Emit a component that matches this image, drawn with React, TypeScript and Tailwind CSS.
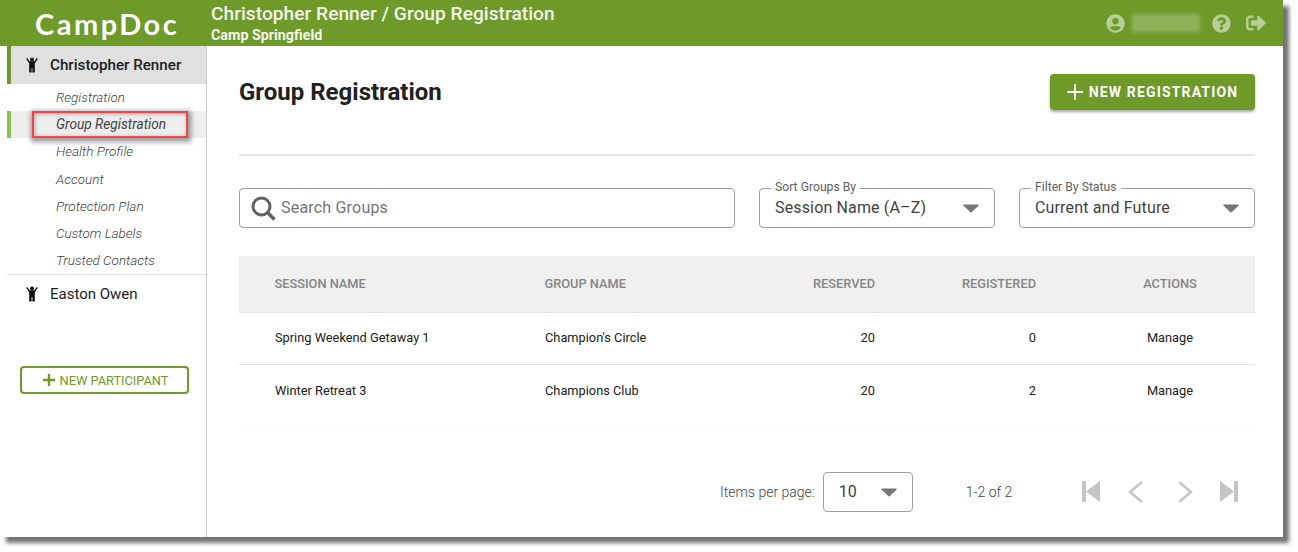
import { FaQuestionCircle, FaSignOutAlt, FaUserCircle } from "react-icons/fa";

const subItems = [
  "Registration",
  "Group Registration",
  "Health Profile",
  "Account",
  "Protection Plan",
  "Custom Labels",
  "Trusted Contacts",
];

const rows = [
  { session: "Spring Weekend Getaway 1", group: "Champion's Circle", reserved: 20, registered: 0 },
  { session: "Winter Retreat 3", group: "Champions Club", reserved: 20, registered: 2 },
];

function PersonIcon() {
  return (
    <svg width="12" height="16" viewBox="0 0 12 16" fill="#111">
      <circle cx="6" cy="2.4" r="2" />
      <path d="M.2 1.8 1.3 1l2.2 3.2h5L10.7 1l1.1.8L8.8 6.6v8.9H6.4v-4.6h-.8v4.6H3.2V6.6z" />
    </svg>
  );
}

function Caret() {
  return (
    <svg width="16" height="9" viewBox="0 0 16 9" fill="#757575" stroke="#757575" strokeWidth="1.5" strokeLinejoin="round">
      <path d="M1 1.2h14L8 7.8z" />
    </svg>
  );
}

function SelectBox({ label, value }: { label: string; value: string }) {
  return (
    <div className="relative flex h-10 w-[236px] items-center justify-between rounded border border-[#9e9e9e] pl-[15px] pr-[15px]">
      <span className="absolute left-[11px] top-[-9px] bg-white px-1 text-[12.2px] leading-[14px] text-[#616161]">{label}</span>
      <span className="text-base tracking-[0.15px] text-[#424242]">{value}</span>
      <Caret />
    </div>
  );
}

function PagerIcon({ d, filled, className }: { d: string; filled?: boolean; className?: string }) {
  return (
    <svg
      width="20"
      height="22"
      viewBox="0 0 20 22"
      fill={filled ? "#c4c4c4" : "none"}
      stroke={filled ? "none" : "#c4c4c4"}
      strokeWidth={filled ? 0 : 2.4}
      className={className}
    >
      <path d={d} />
    </svg>
  );
}

export default function App() {
  return (
    <div className="h-[552px] w-[1298px] overflow-hidden bg-white font-['Roboto',sans-serif]">
      <div className="flex h-[537px] w-[1283px] flex-col bg-white shadow-[6px_6px_4px_rgba(0,0,0,0.55)]">
        {/* Header */}
        <header className="flex h-[46px] shrink-0 items-center bg-[#6d9a29] text-white">
          <div className="w-[211px] shrink-0 pl-[35px] font-['Lato',sans-serif] text-[29px] font-bold leading-none tracking-[2.5px]">CampDoc</div>
          <div className="flex-1 pt-[1px]">
            <div className="text-[19.2px] font-medium leading-[22px] text-[#f4f8ec]">Christopher Renner / Group Registration</div>
            <div className="mt-[1px] text-[14.3px] font-bold leading-[19px] text-[#f4f8ec]">Camp Springfield</div>
          </div>
          <div className="flex items-center pr-[17px] text-[#b8cf94]">
            <FaUserCircle className="text-[19px]" />
            <div className="ml-[7px] h-[18px] w-[68px] bg-[#8fb35c] blur-[2px]" />
            <FaQuestionCircle className="ml-[12px] text-[19px]" />
            <FaSignOutAlt className="ml-[15px] text-[20px]" />
          </div>
        </header>

        <div className="flex min-h-0 flex-1">
          {/* Sidebar */}
          <aside className="relative ml-[7px] w-[200px] shrink-0 border-r border-[#cccccc]">
            <div className="flex h-[38px] items-center border-l-4 border-[#6d9a29] bg-[#e0e0e0] pl-[15px]">
              <PersonIcon />
              <span className="ml-[12px] text-[15.2px] font-medium text-[#212121]">Christopher Renner</span>
            </div>
            <div className="mt-[-0.4px] border-b border-[#e0e0e0]">
              {subItems.map((item, i) => (
                <div
                  key={item}
                  className={
                    i === 1
                      ? "flex h-[27.2px] items-center border-l-4 border-[#8bc34a] bg-[#eeeeee] pl-[45px] text-[13.7px] italic text-[#424242]"
                      : "flex h-[27.2px] items-center pl-[49px] text-[13.5px] font-light italic text-[#424242]"
                  }
                >
                  {item}
                </div>
              ))}
            </div>
            <div className="flex h-[38px] items-center pl-[19px]">
              <PersonIcon />
              <span className="ml-[12px] text-[15px] text-[#212121]">Easton Owen</span>
            </div>
            <div className="ml-[13px] mt-[53px] flex h-7 w-[169px] items-center justify-center rounded border-2 border-[#6d9a29] pl-[2px] pt-[1px] text-[12.8px] text-[#6d9a29]">
              <svg width="12" height="12" viewBox="0 0 12 12" fill="#6d9a29" className="mr-[5px]">
                <path d="M4.8 0h2.4v4.8H12v2.4H7.2V12H4.8V7.2H0V4.8h4.8z" />
              </svg>
              NEW PARTICIPANT
            </div>
            {/* Red callout around the current page */}
            <div className="absolute left-[25px] top-[65px] h-[27px] w-[156px] border-2 border-[#f44546] shadow-[1px_2px_5px_2px_rgba(0,0,0,0.4),inset_1px_1px_4px_rgba(0,0,0,0.3)]" />
          </aside>

          {/* Main */}
          <main className="flex-1 pl-8 pr-7 pt-7">
            <div className="flex h-9 items-center justify-between">
              <h1 className="text-2xl font-bold text-[#212121]">Group Registration</h1>
              <button className="flex h-9 w-[205px] items-center justify-center rounded bg-[#6d9a29] text-sm font-bold tracking-[1.15px] text-white shadow-[0_2px_3px_rgba(0,0,0,0.35)]">
                <svg width="16" height="16" viewBox="0 0 16 16" fill="#fff" className="mr-[6px]">
                  <path d="M7.1 0h1.8v7.1H16v1.8H8.9V16H7.1V8.9H0V7.1h7.1z" />
                </svg>
                NEW REGISTRATION
              </button>
            </div>
            <div className="mt-[44px] h-0.5 bg-[#e4e4e4]" />

            <div className="mt-8 flex gap-6">
              <div className="flex h-10 flex-1 items-center rounded border border-[#9e9e9e] pl-[11px]">
                <svg width="25" height="25" viewBox="0 0 25 25" fill="none" stroke="#616161">
                  <circle cx="10.5" cy="10.5" r="8.5" strokeWidth="3" />
                  <path d="M16.5 16.5 23.5 23.5" strokeWidth="3.6" />
                </svg>
                <span className="ml-[5px] text-base tracking-[0.2px] text-[#757575]">Search Groups</span>
              </div>
              <SelectBox label="Sort Groups By" value="Session Name (A–Z)" />
              <SelectBox label="Filter By Status" value="Current and Future" />
            </div>

            {/* Table */}
            <div className="mt-7">
              <div className="grid h-[57px] grid-cols-[305.5px_230.5px_100px_161px_219px] items-center border-b border-[#e0e0e0] bg-[#f0f0f0] text-[12.8px] font-medium text-[#858585]">
                <div className="pl-[35.5px]">SESSION NAME</div>
                <div>GROUP NAME</div>
                <div className="text-right">RESERVED</div>
                <div className="text-right">REGISTERED</div>
                <div className="pl-[49px] text-center">ACTIONS</div>
              </div>
              {rows.map((row, i) => (
                <div
                  key={row.session}
                  className={
                    i === 0
                      ? "grid h-[52px] grid-cols-[306px_230px_100px_161px_219px] items-center border-b border-[#e0e0e0] pb-[2px] text-[12.8px] text-[#212121]"
                      : "grid h-[66px] grid-cols-[306px_230px_100px_161px_219px] items-start border-b border-[#f7f7f7] pt-[16px] text-[12.8px] text-[#212121]"
                  }
                >
                  <div className="pl-[36px]">{row.session}</div>
                  <div>{row.group}</div>
                  <div className="text-right">{row.reserved}</div>
                  <div className="text-right">{row.registered}</div>
                  <div className="pl-[49px] text-center">Manage</div>
                </div>
              ))}
            </div>

            {/* Pagination */}
            <div className="mt-[41px] flex items-center">
              <span className="ml-[481px] text-sm font-light text-[#424242]">Items per page:</span>
              <div className="ml-2 flex h-10 w-[90px] items-center justify-between rounded border border-[#9e9e9e] pl-[15px] pr-[15px]">
                <span className="text-base text-[#424242]">10</span>
                <Caret />
              </div>
              <span className="ml-[53px] text-sm font-light text-[#424242]">1-2 of 2</span>
              <div className="ml-[69px] flex items-center">
                <PagerIcon filled d="M1 0h4v21H1zM19 1v19q0 1-1 .6L5 10.5 18 .4q1-.4 1 .6z" />
                <PagerIcon d="M16 1 4 11l12 10" className="ml-[25px]" />
                <PagerIcon d="M4 1l12 10L4 21" className="ml-[29px]" />
                <PagerIcon filled d="M15 0h4v21h-4zM1 1v19q0 1 1 .6l13-10.1L2 .4Q1 0 1 1z" className="ml-[24px]" />
              </div>
            </div>
          </main>
        </div>
      </div>
    </div>
  );
}
